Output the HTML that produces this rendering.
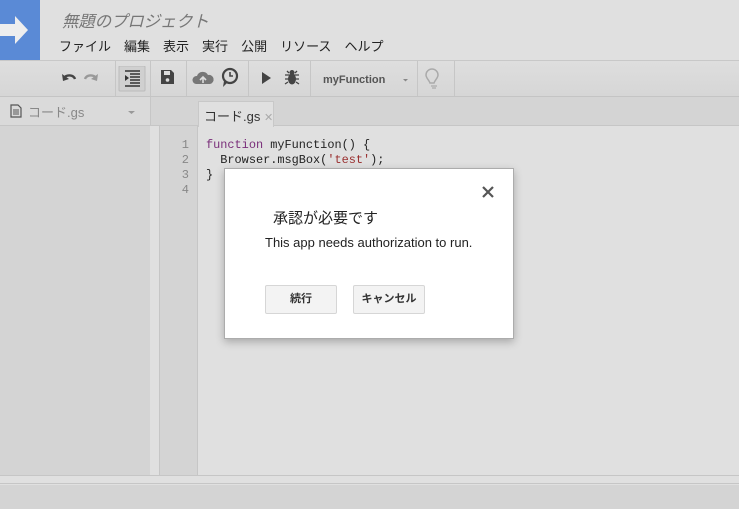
<!DOCTYPE html>
<html><head><meta charset="utf-8"><style>
*{margin:0;padding:0;box-sizing:border-box}
body{width:739px;height:509px;overflow:hidden;background:#e0e0e0;font-family:"Liberation Sans","Noto Sans CJK JP",sans-serif;position:relative}
.a{position:absolute}
.logo{left:0;top:0;width:40px;height:60px;background:#5a8ad6}
.title{left:62px;top:8px;font-size:16.5px;font-style:italic;color:#777;letter-spacing:-0.2px}
.menu{left:59px;top:36px;font-size:13px;color:#222;white-space:nowrap}
.menu span{margin-right:13px}
.tb{left:0;top:60px;width:739px;height:37px;background:linear-gradient(#dedede,#d6d6d6);border-top:1px solid #c8c8c8;border-bottom:1px solid #c4c4c4}
.sep{top:61px;width:1px;height:35px;background:#c6c6c6}
.left{left:0;top:97px;width:150px;height:378px;background:#d4d4d4}
.lefth{left:0;top:97px;width:150px;height:29px;background:#dadada;border-bottom:1px solid #c6c6c6}
.gut{left:159px;top:126px;width:39px;height:349px;background:#d4d4d4;border-left:1px solid #c6c6c6;border-right:1px solid #c6c6c6}
.tabbar{left:150px;top:97px;width:589px;height:29px;background:#d4d4d4;border-bottom:1px solid #c6c6c6;border-left:1px solid #c6c6c6}
.tab{left:198px;top:101px;width:76px;height:26px;background:#e0e0e0;border:1px solid #c8c8c8;border-bottom:none;font-size:13px;color:#333;padding:4px 0 0 5px;white-space:nowrap}
.code{left:206px;top:138px;font-family:"Liberation Mono",monospace;font-size:11.9px;line-height:15px;color:#222;white-space:pre}
.ln{left:170px;top:138px;font-family:"Liberation Mono",monospace;font-size:12px;line-height:15px;color:#888;text-align:right;width:19px;white-space:pre}
.kw{color:#7a2f7a}.st{color:#9a3030}
.bot1{left:0;top:475px;width:739px;height:9px;background:#e0e0e0;border-top:1px solid #c6c6c6;border-bottom:1px solid #c6c6c6}
.bot2{left:0;top:485px;width:739px;height:24px;background:#d4d4d4}
.dlg{left:224px;top:168px;width:290px;height:171px;background:#fff;border:1px solid #acacac;box-shadow:0 3px 8px rgba(0,0,0,.25)}
.btn{position:absolute;top:116px;width:72px;height:29px;background:#f3f3f3;border:1px solid #d6d6d6;border-radius:2px;font-size:11px;font-weight:bold;color:#333;text-align:center;line-height:27px}
</style></head><body>
<div class="a logo"><svg width="40" height="60"><path d="M0 24h15v-8l13 14-13 14v-8H0z" fill="#eee"/></svg></div>
<div class="a title">無題のプロジェクト</div>
<div class="a menu"><span>ファイル</span><span>編集</span><span>表示</span><span>実行</span><span>公開</span><span>リソース</span><span>ヘルプ</span></div>
<div class="a tb"></div>
<div class="a sep" style="left:115px"></div><div class="a sep" style="left:150px"></div><div class="a sep" style="left:186px"></div><div class="a sep" style="left:248px"></div><div class="a sep" style="left:310px"></div><div class="a sep" style="left:417px"></div><div class="a sep" style="left:454px"></div>
<svg class="a" style="left:60px;top:66px" width="400" height="26">
<path d="M4 12a6 5 0 0 1 11 1" stroke="#444" stroke-width="2.4" fill="none"/><path d="M2 8l1 7 6-2z" fill="#444"/>
<path d="M36 12a6 5 0 0 0-11 1" stroke="#999" stroke-width="2.4" fill="none"/><path d="M38 8l-1 7-6-2z" fill="#999"/>
<rect x="59" y="0" width="26" height="25" fill="#d0d0d0" stroke="#bbb" rx="1"/>
<path d="M65 5h15M70 8h10M70 11h10M70 14h10M70 17h10M65 20h15" stroke="#333" stroke-width="1.4"/><path d="M65 9l4 3-4 3z" fill="#333"/>
<path d="M101 4h10l3 3v11h-13z" fill="#444"/><rect x="104" y="5" width="6" height="4" fill="#ddd"/><circle cx="107.5" cy="14" r="1.8" fill="#ddd"/>
<path d="M136 18a4 4 0 0 1 1-8 6 6 0 0 1 11-1 4.5 4.5 0 0 1 2 9z" fill="#777"/><path d="M143 17v-5M140 14l3-3 3 3" stroke="#ddd" stroke-width="1.6" fill="none"/>
<circle cx="170" cy="10" r="7" fill="none" stroke="#444" stroke-width="2.2"/><path d="M170 6v4h3" stroke="#444" stroke-width="1.6" fill="none"/><path d="M164 15l-1 6 4-4z" fill="#444"/>
<path d="M202 6l9 6-9 6z" fill="#444"/>
<ellipse cx="232" cy="13" rx="4" ry="5.5" fill="#444"/><circle cx="232" cy="6.5" r="2.5" fill="#444"/><path d="M225 9l14 0M225 13h14M225 18l3-2M239 18l-3-2M227 5l2 2M237 5l-2 2" stroke="#444" stroke-width="1.3"/>
<text x="263" y="17" font-family="Liberation Sans" font-size="11" font-weight="bold" fill="#555">myFunction</text>
<path d="M343 13h5l-2.5 2.5z" fill="#888"/>
<path d="M370 17c-1-3-4-5-4-8a6 6 0 0 1 12 0c0 3-3 5-4 8z" fill="none" stroke="#aaa" stroke-width="1.5"/><path d="M371 20h6M372 22h4" stroke="#aaa" stroke-width="1.3"/>
</svg>
<div class="a left"></div>
<div class="a lefth"></div>
<svg class="a" style="left:10px;top:104px" width="12" height="14"><path d="M1 1h7l3 3v9H1z" fill="none" stroke="#555" stroke-width="1.2"/><path d="M3 6h6M3 8h6M3 10h6" stroke="#555"/></svg>
<div class="a" style="left:28px;top:102px;font-size:13px;color:#888">コード.gs</div>
<svg class="a" style="left:127px;top:110px" width="10" height="6"><path d="M1 1h7l-3.5 3z" fill="#999"/></svg>
<div class="a tabbar"></div>
<div class="a gut"></div>
<div class="a tab">コード.gs <span style="color:#aaa;font-size:11px">✕</span></div>
<div class="a ln">1
2
3
4</div>
<div class="a code"><span class="kw">function</span> myFunction() {
  Browser.msgBox(<span class="st">'test'</span>);
}</div>
<div class="a bot1"></div><div class="a bot2"></div>
<div class="a dlg">
<svg class="a" style="left:257px;top:17px" width="12" height="12"><path d="M1 1l10 10M11 1L1 11" stroke="#555" stroke-width="2.2"/></svg>
<div class="a" style="left:48px;top:38px;font-size:15px;color:#222">承認が必要です</div>
<div class="a" style="left:40px;top:66px;font-size:13px;color:#222">This app needs authorization to run.</div>
<div class="btn" style="left:40px">続行</div>
<div class="btn" style="left:128px">キャンセル</div>
</div>
</body></html>
